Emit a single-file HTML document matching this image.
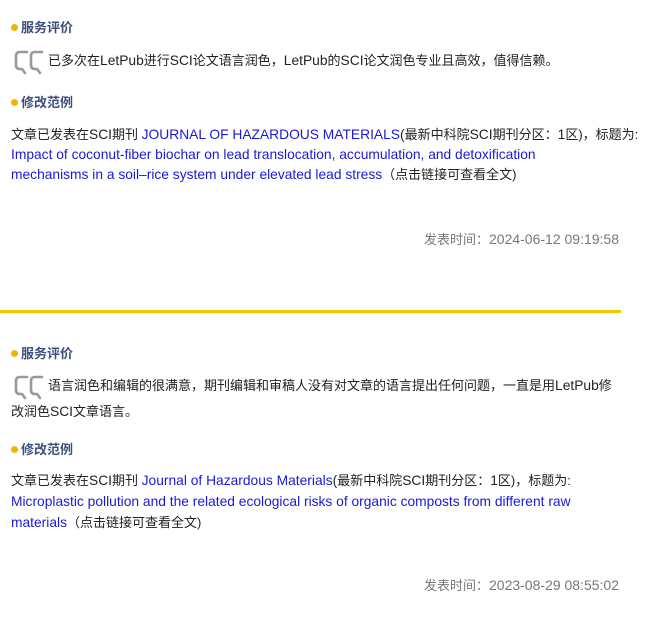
<!DOCTYPE html>
<html><head><meta charset="utf-8"><style>
body{margin:0;width:653px;height:626px;background:#fff;font-family:"Liberation Sans","Noto Sans CJK SC",sans-serif;font-size:13px;color:#222;position:relative;overflow:hidden}
.a{position:absolute;left:11px;width:640px;white-space:nowrap}
.h{font-weight:bold;color:#3d4f7c;font-size:13px;line-height:20px}
.h:before{content:"";display:inline-block;width:7px;height:7px;border-radius:50%;background:#f0b400;margin-right:3px;vertical-align:1px}
.q{line-height:26px}
.q svg{float:left;margin:2px 3px -8px 3px}
.t{line-height:20px}
.e{font-size:13.8px}
.b{color:#1a1ad6}
.d{position:absolute;right:34px;color:#777;font-size:13px}
.d .e{font-size:14px}
.line{position:absolute;left:0;top:310px;width:621px;height:3px;background:#f5c500}
</style></head><body>
<svg width="0" height="0" style="position:absolute"><defs><g id="qq" fill="none" stroke="#999" stroke-width="2.6" stroke-linecap="round" stroke-linejoin="round"><path d="M13 2H6Q2 2 2 6V15Q2 19 6 19H8L11 23"/><path d="M28 2H21Q17 2 17 6V15Q17 19 21 19H23L26 23"/></g></defs></svg>

<div class="a h" style="top:18px">服务评价</div>
<div class="a q" style="top:48px"><svg width="31" height="26" viewBox="0 0 31 26"><use href="#qq"/></svg>已多次在<span class="e">LetPub</span>进行<span class="e">SCI</span>论文语言润色，<span class="e">LetPub</span>的<span class="e">SCI</span>论文润色专业且高效，值得信赖。</div>
<div class="a h" style="top:93px">修改范例</div>
<div class="a t" style="top:125px">文章已发表在<span class="e">SCI</span>期刊 <span class="b e">JOURNAL OF HAZARDOUS MATERIALS</span><span class="e">(</span>最新中科院<span class="e">SCI</span>期刊分区：<span class="e">1</span>区)，标题为:<br><span class="b e">Impact of coconut-fiber biochar on lead translocation, accumulation, and detoxification<br>mechanisms in a soil–rice system under elevated lead stress</span>（点击链接可查看全文)</div>
<div class="d" style="top:229px">发表时间：<span class="e">2024-06-12 09:19:58</span></div>
<div class="line"></div>

<div class="a h" style="top:344px">服务评价</div>
<div class="a q" style="top:373px"><svg width="31" height="26" viewBox="0 0 31 26"><use href="#qq"/></svg>语言润色和编辑的很满意，期刊编辑和审稿人没有对文章的语言提出任何问题，一直是用<span class="e">LetPub</span>修<br>改润色<span class="e">SCI</span>文章语言。</div>
<div class="a h" style="top:440px">修改范例</div>
<div class="a t" style="top:470px;line-height:21px">文章已发表在<span class="e">SCI</span>期刊 <span class="b e">Journal of Hazardous Materials</span><span class="e">(</span>最新中科院<span class="e">SCI</span>期刊分区：<span class="e">1</span>区)，标题为:<br><span class="b e">Microplastic pollution and the related ecological risks of organic composts from different raw<br>materials</span>（点击链接可查看全文)</div>
<div class="d" style="top:575px">发表时间：<span class="e">2023-08-29 08:55:02</span></div>
</body></html>
